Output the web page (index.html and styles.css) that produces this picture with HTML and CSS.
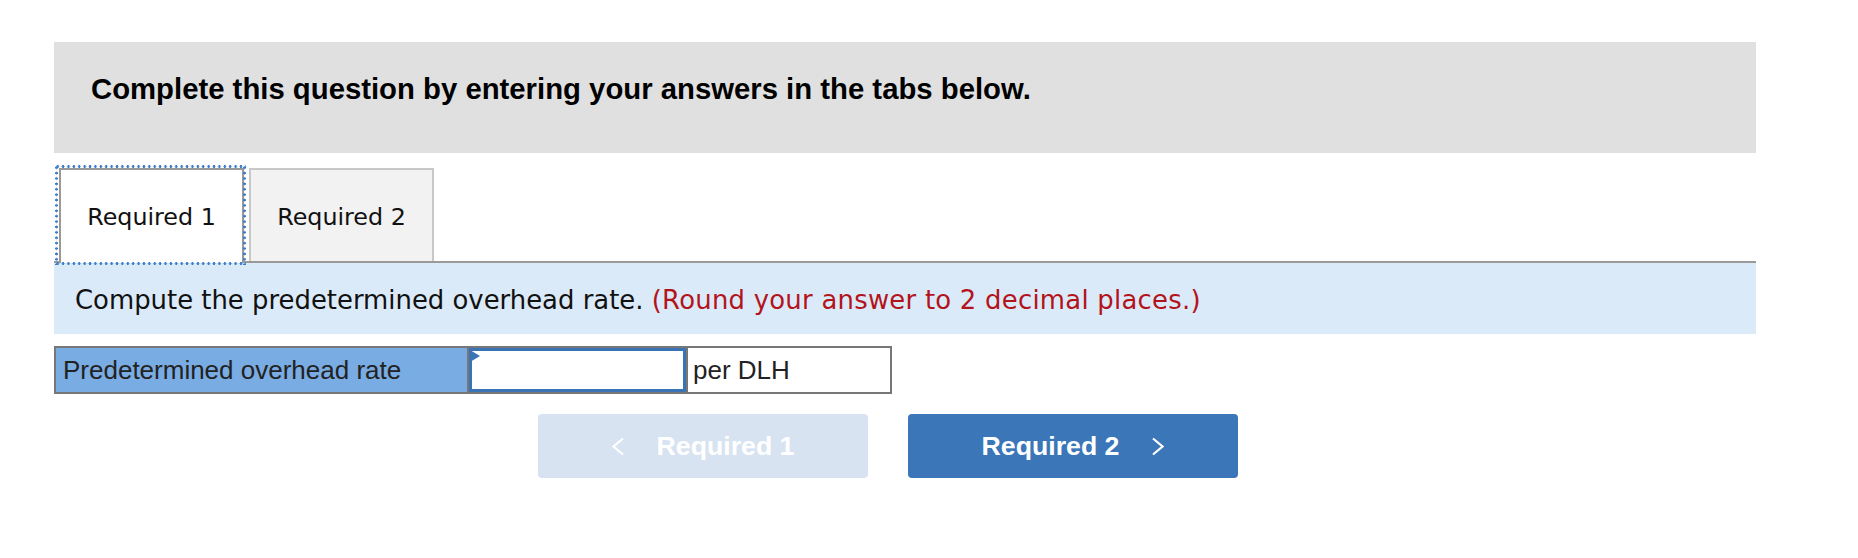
FILE: index.html
```html
<!DOCTYPE html>
<html lang="en">
<head>
<meta charset="utf-8">
<title>Required 1</title>
<link rel="stylesheet" href="styles.css">
</head>
<body>
<div class="page">
  <div class="instructions">
    <p class="instructions-text">Complete this question by entering your answers in the tabs below.</p>
  </div>

  <div class="tabs">
    <div class="tab tab-active">Required 1</div>
    <div class="tab">Required 2</div>
  </div>

  <div class="prompt">Compute the predetermined overhead rate.&nbsp;<span class="hint">(Round your answer to 2 decimal places.)</span></div>

  <div class="answer-row">
    <div class="answer-label">Predetermined overhead rate</div>
    <div class="answer-input-cell">
      <input class="answer-input" type="text" aria-label="Predetermined overhead rate">
      <span class="answer-flag"></span>
    </div>
    <div class="answer-unit">per DLH</div>
  </div>

  <div class="nav">
    <button class="nav-btn nav-prev" type="button">
      <svg class="chev" width="12" height="19" viewBox="0 0 12 19"><polyline points="11,1.5 1.5,9.5 11,17.5" fill="none" stroke="#ffffff" stroke-width="2.2"/></svg>
      <span>Required 1</span>
    </button>
    <button class="nav-btn nav-next" type="button">
      <span>Required 2</span>
      <svg class="chev" width="12" height="19" viewBox="0 0 12 19"><polyline points="1,1.5 10.5,9.5 1,17.5" fill="none" stroke="#ffffff" stroke-width="2.2"/></svg>
    </button>
  </div>
</div>
</body>
</html>
```

FILE: styles.css
```css
html, body {
  margin: 0;
  padding: 0;
  background: #ffffff;
}

.page {
  margin-left: 54px;
  padding-top: 42px;
  width: 1702px;
}

.instructions {
  box-sizing: border-box;
  height: 111px;
  background: #e0e0e0;
  padding: 30px 0 0 37px;
}

.instructions-text {
  margin: 0;
  font-family: "Liberation Sans", Arial, sans-serif;
  font-weight: bold;
  font-size: 29.3px;
  line-height: 33px;
  color: #000000;
}

.tabs {
  display: flex;
  align-items: flex-start;
  gap: 5px;
  margin-top: 15px;
  padding-left: 5px;
  border-bottom: 2px solid #9a9a9a;
}

.tab {
  box-sizing: border-box;
  width: 185px;
  height: 93px;
  display: flex;
  align-items: center;
  justify-content: center;
  padding-top: 2px;
  border: 2px solid #c8c8c8;
  border-bottom: none;
  background: #f2f2f2;
  font-family: "DejaVu Sans", Verdana, sans-serif;
  font-size: 23.8px;
  color: #111111;
}

.tab-active {
  position: relative;
  z-index: 1;
  height: 95px;
  margin-bottom: -2px;
  padding-bottom: 2px;
  background: #ffffff;
  border-color: #999999;
}

.tab-active::before {
  content: "";
  position: absolute;
  top: -5px;
  left: -6px;
  right: -4px;
  bottom: -2px;
  pointer-events: none;
  background:
    radial-gradient(circle, #3d7cc6 1.1px, transparent 1.6px) 0 0 / 5.4px 3px repeat-x,
    radial-gradient(circle, #3d7cc6 1.1px, transparent 1.6px) 0 100% / 5.4px 3px repeat-x,
    radial-gradient(circle, #3d7cc6 1.1px, transparent 1.6px) 0 0 / 3px 5.4px repeat-y,
    radial-gradient(circle, #3d7cc6 1.1px, transparent 1.6px) 100% 0 / 3px 5.4px repeat-y;
}

.prompt {
  box-sizing: border-box;
  height: 71px;
  display: flex;
  align-items: center;
  padding-left: 21px;
  padding-top: 2px;
  background: #dbeaf8;
  font-family: "DejaVu Sans", Verdana, sans-serif;
  font-size: 25.9px;
  color: #111111;
  white-space: nowrap;
}

.hint {
  color: #b3141b;
  letter-spacing: 0.25px;
}

.answer-row {
  display: flex;
  width: 838px;
  height: 48px;
  box-sizing: border-box;
  margin-top: 12px;
  border: 2px solid #777777;
}

.answer-label {
  box-sizing: border-box;
  flex: 0 0 413px;
  display: flex;
  align-items: center;
  padding-left: 7px;
  background: #79ace2;
  border-right: 2px solid #777777;
  font-family: "Liberation Sans", Arial, sans-serif;
  font-size: 26px;
  color: #222222;
}

.answer-input-cell {
  position: relative;
  box-sizing: border-box;
  flex: 0 0 219px;
  border-right: 2px solid #777777;
  background: #ffffff;
}

.answer-input {
  box-sizing: border-box;
  display: block;
  width: 100%;
  height: 100%;
  margin: 0;
  padding: 0 8px;
  border: 3px solid #3a74b6;
  background: #ffffff;
  font-family: "Liberation Sans", Arial, sans-serif;
  font-size: 26px;
  outline: none;
}

.answer-flag {
  position: absolute;
  top: 2px;
  left: 1px;
  width: 0;
  height: 0;
  border-left: 10px solid #3a74b6;
  border-top: 6.5px solid transparent;
  border-bottom: 6.5px solid transparent;
}

.answer-unit {
  flex: 1 1 auto;
  display: flex;
  align-items: center;
  padding-left: 5px;
  background: #ffffff;
  font-family: "Liberation Sans", Arial, sans-serif;
  font-size: 26px;
  color: #222222;
}

.nav {
  display: flex;
  gap: 40px;
  margin-top: 20px;
  padding-left: 484px;
}

.nav-btn {
  box-sizing: border-box;
  width: 330px;
  height: 64px;
  display: flex;
  align-items: center;
  justify-content: center;
  gap: 33px;
  margin: 0;
  padding: 0;
  border: none;
  border-radius: 4px;
  font-family: "Liberation Sans", Arial, sans-serif;
  font-weight: bold;
  font-size: 26.7px;
  color: #ffffff;
  cursor: pointer;
}

.nav-prev {
  background: #d7e3f1;
}

.nav-next {
  background: #3a76b8;
}

.chev {
  display: block;
  flex: 0 0 auto;
}
```
